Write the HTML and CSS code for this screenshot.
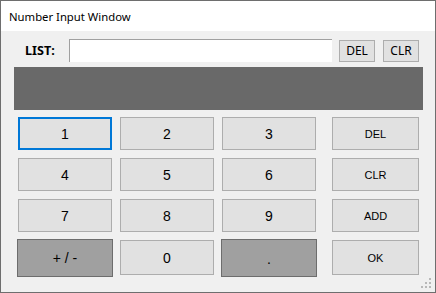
FILE: index.html
```html
<!DOCTYPE html>
<html>
<head>
<meta charset="utf-8">
<title>Number Input Window</title>
<link rel="stylesheet" href="styles.css">
</head>
<body>
<div class="window">
  <div class="titlebar">Number Input Window</div>
  <div class="content">
    <div class="list-row">
      <span class="list-label">LIST:</span>
      <div class="list-input"></div>
      <button class="small-btn">DEL</button>
      <button class="small-btn">CLR</button>
    </div>
    <div class="display"></div>
    <div class="pad">
      <div class="digits">
        <button class="key digit focused">1</button>
        <button class="key digit">2</button>
        <button class="key digit">3</button>
        <button class="key digit">4</button>
        <button class="key digit">5</button>
        <button class="key digit">6</button>
        <button class="key digit">7</button>
        <button class="key digit">8</button>
        <button class="key digit">9</button>
        <button class="key digit dark">+ / -</button>
        <button class="key digit">0</button>
        <button class="key digit dark dot">.</button>
      </div>
      <div class="ops">
        <button class="key op">DEL</button>
        <button class="key op">CLR</button>
        <button class="key op">ADD</button>
        <button class="key op">OK</button>
      </div>
    </div>
  </div>
  <svg class="grip" width="12" height="12" viewBox="0 0 12 12">
    <rect x="8" y="0" width="2" height="2" fill="#b8b8b8"/>
    <rect x="4" y="4" width="2" height="2" fill="#b8b8b8"/>
    <rect x="8" y="4" width="2" height="2" fill="#b8b8b8"/>
    <rect x="0" y="8" width="2" height="2" fill="#b8b8b8"/>
    <rect x="4" y="8" width="2" height="2" fill="#b8b8b8"/>
    <rect x="8" y="8" width="2" height="2" fill="#b8b8b8"/>
  </svg>
</div>
</body>
</html>
```
FILE: styles.css
```css
html, body {
  margin: 0;
  padding: 0;
  background: #f0f0f0;
}
.window {
  position: relative;
  width: 436px;
  height: 293px;
  box-sizing: border-box;
  border: 1px solid #6e6e6e;
  background: #f0f0f0;
  overflow: hidden;
}
.titlebar {
  height: 30px;
  background: #ffffff;
  display: flex;
  align-items: center;
  padding-left: 8px;
  font-family: "Noto Sans", sans-serif;
  font-size: 11.3px;
  color: #000;
}
.content {
  display: flex;
  flex-direction: column;
}
.list-row {
  display: flex;
  align-items: flex-start;
  margin-top: 8px;
  padding-left: 24px;
  height: 23px;
}
.list-label {
  width: 44px;
  height: 23px;
  line-height: 23px;
  font-family: "Noto Sans", sans-serif;
  font-weight: bold;
  font-size: 12.6px;
  color: #000;
}
.list-input {
  width: 263px;
  height: 23px;
  box-sizing: border-box;
  background: #fff;
  border-top: 1px solid #a0a0a0;
  border-left: 1px solid #a0a0a0;
}
.small-btn {
  margin-top: 1px;
  margin-left: 7px;
  width: 36px;
  height: 22px;
  box-sizing: border-box;
  border: 1px solid #adadad;
  background: #e1e1e1;
  font-family: "Noto Sans", sans-serif;
  font-size: 12px;
  color: #000;
  padding: 0;
  line-height: 18px;
}
.small-btn + .small-btn {
  margin-left: 8px;
}
.display {
  margin-top: 5px;
  margin-left: 13px;
  width: 409px;
  height: 43px;
  background: #696969;
}
.pad {
  display: flex;
  margin-top: 7px;
  padding-left: 17px;
  gap: 16px;
}
.digits {
  display: grid;
  grid-template-columns: repeat(3, 94px);
  grid-template-rows: 33px 33px 33px 35px;
  column-gap: 8px;
  row-gap: 8px;
}
.ops {
  display: grid;
  grid-template-columns: 87px;
  grid-template-rows: 33px 33px 33px 35px;
  row-gap: 8px;
}
.key {
  box-sizing: border-box;
  border: 1px solid #adadad;
  background: #e1e1e1;
  color: #000;
  padding: 0;
  font-family: "Liberation Sans", Arial, sans-serif;
  margin: 0;
}
.digit {
  font-size: 14px;
}
.op {
  font-size: 11px;
}
.focused {
  border: 2px solid #0078d7;
}
.dark {
  background: #a0a0a0;
  border: 1px solid #6d6d6d;
  margin: -1px -1px -2px -1px;
}
.dot {
  padding-top: 1px;
}
.grip {
  position: absolute;
  right: 2px;
  bottom: 2px;
}
```
